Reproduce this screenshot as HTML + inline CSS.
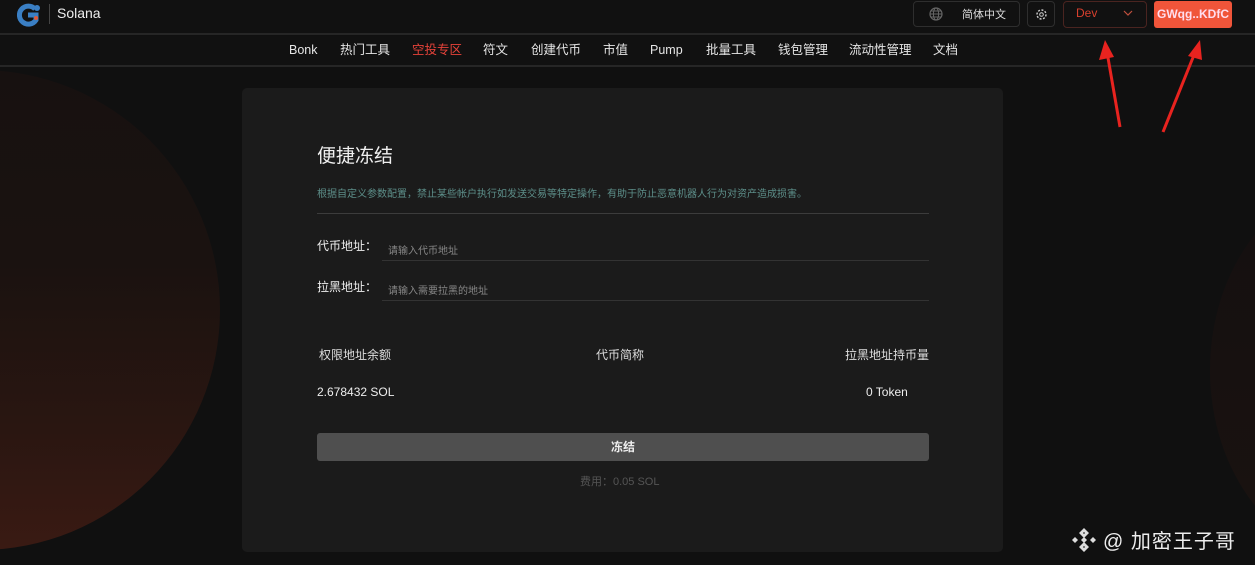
<!DOCTYPE html>
<html><head><meta charset="utf-8"><style>
*{margin:0;padding:0;box-sizing:border-box}
body{width:1255px;height:565px;background:#101010;overflow:hidden;position:relative;font-family:"Liberation Sans","Noto Sans CJK SC",sans-serif;color:#e8e8e8}
.a{position:absolute;white-space:nowrap}
.nav span{position:absolute;top:42px;height:16px;line-height:16px;font-size:12.5px;color:#e6e6e6}
</style></head><body>
<div class="a" style="left:-260px;top:70px;width:480px;height:480px;border-radius:50%;background:linear-gradient(180deg,#171110 0%,#1a1210 40%,#2a1611 75%,#3a1a13 100%)"></div>
<div class="a" style="left:1210px;top:180px;width:300px;height:380px;border-radius:50%;background:linear-gradient(180deg,#141010,#1a1210)"></div>
<div class="a" style="left:0;top:0;width:1255px;height:35px;background:#111;border-bottom:2px solid #262626"></div>
<div class="a" style="left:0;top:36px;width:1255px;height:31px;background:#111;border-bottom:2px solid #262626"></div>
<svg class="a" style="left:15px;top:3px" width="28" height="26" viewBox="0 0 28 26"><path d="M20 6 A9 9 0 1 0 21 17 L21 12 L13 12" fill="none" stroke="#3a7fc4" stroke-width="5"/><circle cx="22" cy="5" r="3" fill="#3a7fc4"/><circle cx="21" cy="15" r="2" fill="#e05a3a"/></svg>
<div class="a" style="left:49px;top:4px;width:1px;height:20px;background:#444"></div>
<div class="a" style="left:57px;top:5px;font-size:14px;color:#eee">Solana</div>
<div class="a" style="left:913px;top:1px;width:107px;height:26px;border:1px solid #2e2e2e;border-radius:4px"></div>
<svg class="a" style="left:929px;top:7px" width="14" height="14" viewBox="0 0 14 14"><circle cx="7" cy="7" r="6" fill="none" stroke="#666" stroke-width="1.2"/><ellipse cx="7" cy="7" rx="2.6" ry="6" fill="none" stroke="#666"/><path d="M1 7H13M2 4H12M2 10H12" stroke="#666"/></svg>
<div class="a" style="left:962px;top:6px;font-size:11px;color:#ddd">简体中文</div>
<div class="a" style="left:1027px;top:1px;width:28px;height:26px;border:1px solid #2e2e2e;border-radius:4px"></div>
<svg class="a" style="left:1035px;top:8px" width="13" height="13" viewBox="0 0 13 13"><circle cx="6.5" cy="6.5" r="4.5" fill="none" stroke="#ccc" stroke-width="1.4" stroke-dasharray="2 1.5"/><circle cx="6.5" cy="6.5" r="1.8" fill="none" stroke="#ccc"/></svg>
<div class="a" style="left:1063px;top:1px;width:84px;height:27px;border:1px solid #4a2420;border-radius:4px"></div>
<div class="a" style="left:1076px;top:6px;font-size:12px;color:#d8402e">Dev</div>
<svg class="a" style="left:1123px;top:10px" width="10" height="6"><path d="M1 1L5 5L9 1" fill="none" stroke="#c0503e" stroke-width="1.2"/></svg>
<div class="a" style="left:1154px;top:1px;width:78px;height:27px;background:#f0553a;border-radius:3px;font-size:12px;font-weight:bold;color:#fde;text-align:center;line-height:27px">GWqg..KDfC</div>
<div class="nav">
<span style="left:289px">Bonk</span><span style="left:340px">热门工具</span><span style="left:412px;color:#e8433a">空投专区</span><span style="left:483px">符文</span><span style="left:531px">创建代币</span><span style="left:603px">市值</span><span style="left:650px">Pump</span><span style="left:706px">批量工具</span><span style="left:778px">钱包管理</span><span style="left:849px">流动性管理</span><span style="left:933px">文档</span>
</div>
<svg class="a" style="left:1095px;top:30px" width="120" height="110"><g stroke="#e8231f" stroke-width="3" fill="#e8231f"><line x1="25" y1="97" x2="12" y2="22"/><line x1="68" y1="102" x2="101" y2="20"/></g><polygon points="10,10 4,30 19,27" fill="#e8231f"/><polygon points="105,10 93,26 107,30" fill="#e8231f"/></svg>
<div class="a" style="left:242px;top:88px;width:761px;height:464px;background:#1b1b1b;border-radius:5px"></div>
<div class="a" style="left:317px;top:141px;font-size:19px;color:#f0f0f0">便捷冻结</div>
<div class="a" style="left:317px;top:185px;font-size:10px;color:#5d8f8a">根据自定义参数配置，禁止某些帐户执行如发送交易等特定操作，有助于防止恶意机器人行为对资产造成损害。</div>
<div class="a" style="left:317px;top:213px;width:612px;height:1px;background:#3c3c3c"></div>
<div class="a" style="left:317px;top:237px;font-size:12px;color:#eee">代币地址：</div>
<div class="a" style="left:388px;top:242px;font-size:10px;color:#888">请输入代币地址</div>
<div class="a" style="left:382px;top:260px;width:547px;height:1px;background:#333"></div>
<div class="a" style="left:317px;top:278px;font-size:12px;color:#eee">拉黑地址：</div>
<div class="a" style="left:388px;top:282px;font-size:10px;color:#888">请输入需要拉黑的地址</div>
<div class="a" style="left:382px;top:300px;width:547px;height:1px;background:#333"></div>
<div class="a" style="left:319px;top:346px;font-size:12px;color:#ddd">权限地址余额</div>
<div class="a" style="left:596px;top:346px;font-size:12px;color:#ddd">代币简称</div>
<div class="a" style="left:845px;top:346px;font-size:12px;color:#ddd">拉黑地址持币量</div>
<div class="a" style="left:317px;top:385px;font-size:12px;color:#eee">2.678432 SOL</div>
<div class="a" style="left:866px;top:385px;font-size:12px;color:#eee">0 Token</div>
<div class="a" style="left:317px;top:433px;width:612px;height:28px;background:#4f4f4f;border-radius:3px;text-align:center;line-height:28px;font-size:12px;font-weight:bold;color:#eee">冻结</div>
<div class="a" style="left:580px;top:473px;font-size:11px;color:#555">费用：0.05 SOL</div>
<svg class="a" style="left:1070px;top:526px" width="28" height="28" viewBox="0 0 28 28"><g fill="#ddd"><path d="M14 2L19 7L14 12L9 7Z M14 6L15 7L14 8L13 7Z" fill-rule="evenodd"/><path d="M14 16L19 21L14 26L9 21Z M14 20L15 21L14 22L13 21Z" fill-rule="evenodd"/><path d="M5 11L8 14L5 17L2 14Z"/><path d="M23 11L26 14L23 17L20 14Z"/><path d="M14 11L17 14L14 17L11 14Z"/></g></svg>
<div class="a" style="left:1103px;top:525px;font-size:20px;color:#eee;letter-spacing:1px">@ 加密王子哥</div>
</body></html>
